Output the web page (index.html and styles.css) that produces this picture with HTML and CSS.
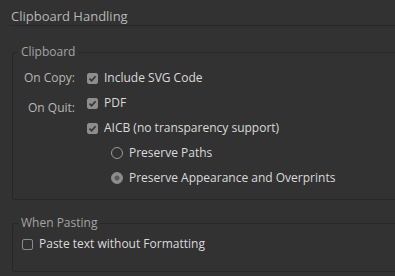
FILE: index.html
```html
<!DOCTYPE html>
<html>
<head>
  <link rel="stylesheet" href="styles.css">
</head>
<body>
  <div class="panel">
    <h2 class="title">Clipboard Handling</h2>

    <fieldset class="group clipboard">
      <legend>Clipboard</legend>
      <div class="options">
        <div class="label">On Copy:</div>
        <div class="opt"><span class="box checked"><svg viewBox="0 0 11 11"><path d="M2.5 5.6 L4.6 7.7 L8.6 3.2"/></svg></span>Include SVG Code</div>

        <div class="label quit">On Quit:</div>
        <div class="opt"><span class="box checked"><svg viewBox="0 0 11 11"><path d="M2.5 5.6 L4.6 7.7 L8.6 3.2"/></svg></span>PDF</div>

        <div></div>
        <div class="opt"><span class="box checked"><svg viewBox="0 0 11 11"><path d="M2.5 5.6 L4.6 7.7 L8.6 3.2"/></svg></span>AICB (no transparency support)</div>

        <div></div>
        <div class="opt sub"><span class="radio"></span>Preserve Paths</div>

        <div></div>
        <div class="opt sub"><span class="radio on"></span>Preserve Appearance and Overprints</div>
      </div>
    </fieldset>

    <fieldset class="group pasting">
      <legend>When Pasting</legend>
      <div class="opt"><span class="box"></span>Paste text without Formatting</div>
    </fieldset>
  </div>
</body>
</html>
```

FILE: styles.css
```css
:root {
  --bg: #323232;
  --line: #272727;
  --text: #dadada;
  --dim: #b6b6b6;
  --legend: #a4a4a4;
  --check: #8d8d8d;
}

* {
  margin: 0;
  padding: 0;
  box-sizing: border-box;
}

html, body {
  background: var(--bg);
  overflow: hidden;
}

body {
  font-family: 'Open Sans', sans-serif;
  font-size: 12px;
  color: var(--text);
  width: 395px;
  height: 276px;
}

.panel {
  padding: 8px 0 0 11px;
}

.title {
  font-size: 13px;
  font-weight: normal;
  color: var(--dim);
  line-height: 16px;
  padding-bottom: 1px;
  border-bottom: 1px solid var(--line);
}

.group {
  border: 1px solid var(--line);
  border-right: 0;
  border-radius: 3px 0 0 3px;
  margin-left: 1px;
}

.group legend {
  margin-left: 5px;
  padding: 0 3px;
  color: var(--legend);
  line-height: 14px;
}

.clipboard {
  margin-top: 19px;
  height: 155px;
}

.options {
  display: grid;
  grid-template-columns: 54px auto;
  column-gap: 12px;
  row-gap: 7px;
  padding: 10px 0 0 8px;
}

.label {
  text-align: right;
  color: var(--dim);
  line-height: 18px;
}

.label.quit {
  padding-top: 5px;
  margin-bottom: -5px;
}

.opt {
  display: flex;
  align-items: center;
  gap: 6px;
  line-height: 18px;
}

.opt.sub {
  padding-left: 24px;
}

.box {
  width: 11px;
  height: 11px;
  border: 1px solid #8a8a8a;
  border-radius: 2px;
  flex: none;
}

.box.checked {
  background: var(--check);
  border-color: var(--check);
}

.box svg {
  display: block;
  width: 11px;
  height: 11px;
  margin: -1px;
  fill: none;
  stroke: #353535;
  stroke-width: 1.7;
}

.radio {
  width: 12px;
  height: 12px;
  border: 1px solid #9a9a9a;
  border-radius: 50%;
  flex: none;
}

.radio.on {
  background: radial-gradient(circle, #5a5a5a 0 2.3px, var(--check) 2.8px);
  border-color: var(--check);
}

.pasting {
  margin-top: 16px;
  height: 56px;
}

.pasting .opt {
  padding: 5px 0 0 9px;
}
```
